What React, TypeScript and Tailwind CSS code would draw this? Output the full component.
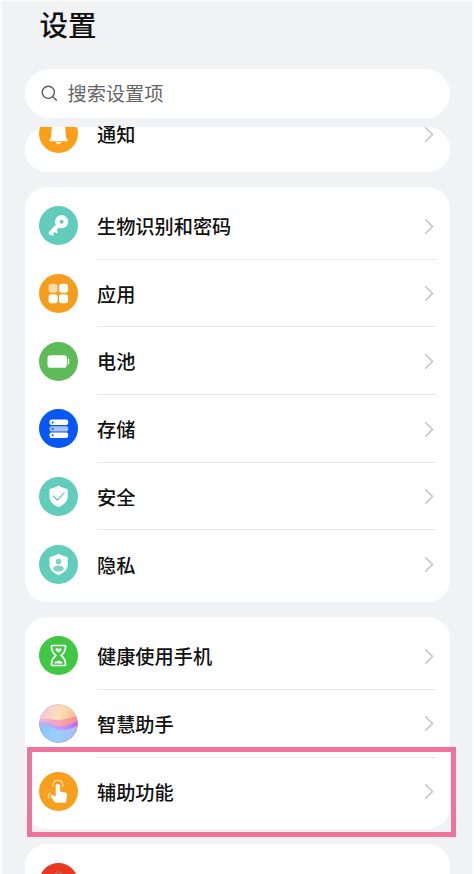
import type { ReactNode } from "react";

type Item = {
  label: string;
  color: string;
  icon: ReactNode;
};

const BellIcon = () => (
  <svg viewBox="0 0 39 39" className="size-[39px]" fill="#fff">
    <path d="M19.500 8c-4.600 0-6.600 3.300-6.900 7.400l-.5 7c-.2 1.700-.8 2.500-1.600 3.400-.5.700-.1 1.500.7 1.500h16.600c.8 0 1.200-.8.7-1.500-.8-.9-1.400-1.700-1.600-3.400l-.5-7C26.100 11.300 24.100 8 19.500 8z" />
    <path d="M16.800 28.300h5.400c-.4 1.300-1.400 2-2.700 2s-2.300-.7-2.700-2z" />
  </svg>
);

const KeyIcon = () => (
  <svg viewBox="0 0 39 39" className="size-full">
    <circle cx="22.600" cy="15.700" r="4.300" fill="none" stroke="#fff" strokeWidth="4.600" />
    <path d="M19 19.500 11.800 27" stroke="#fff" strokeWidth="4.200" strokeLinecap="round" />
    <path d="m15.500 24 2 2M12.200 27.200l1.300 1.300" stroke="#fff" strokeWidth="2.400" strokeLinecap="round" />
  </svg>
);

const AppsIcon = () => (
  <svg viewBox="0 0 39 39" className="size-full" fill="#fff">
    <rect x="9.600" y="9.800" width="9" height="9" rx="2.800" opacity=".62" />
    <rect x="20" y="9.800" width="9" height="9" rx="2.800" />
    <rect x="9.600" y="20.200" width="9" height="9" rx="2.800" />
    <rect x="20" y="20.200" width="9" height="9" rx="2.800" />
  </svg>
);

const BatteryIcon = () => (
  <svg viewBox="0 0 39 39" className="size-full" fill="#fff">
    <rect x="8.500" y="13.300" width="19.300" height="12.400" rx="2.800" />
    <path d="M28.600 16.500h.7c.6 0 1 .4 1 1v4c0 .6-.4 1-1 1h-.7z" opacity=".75" />
  </svg>
);

const StorageIcon = () => (
  <svg viewBox="0 0 39 39" className="size-full" fill="#fff">
    <rect x="10.500" y="10.600" width="18.700" height="5.400" rx="2" />
    <rect x="10.500" y="17.200" width="18.700" height="5.200" rx="2" opacity=".65" />
    <rect x="10.500" y="23.600" width="18.700" height="5.400" rx="2" />
    <g fill="#0b4fe0">
      <circle cx="13.700" cy="13.400" r="1" />
      <circle cx="13.700" cy="19.800" r="1" />
      <circle cx="13.700" cy="26.200" r="1" />
    </g>
  </svg>
);

const shield = "M19.500 8.600c-2.500 1.700-5.200 2.700-8 3.100-.7.100-1 .5-1 1.200v6.600c0 5 3.500 8.300 9 10.700 5.500-2.400 9.200-5.700 9.200-10.700v-6.600c0-.7-.4-1.100-1.100-1.200-2.900-.4-5.600-1.400-8.100-3.100z";

const SafetyIcon = () => (
  <svg viewBox="0 0 39 39" className="size-full">
    <path d={shield} fill="#fff" />
    <path d="m14 18.800 4.300 4.200 7.200-7.400" fill="none" stroke="#67cdbc" strokeWidth="1.300" />
  </svg>
);

const PrivacyIcon = () => (
  <svg viewBox="0 0 39 39" className="size-full">
    <path d={shield} fill="#fff" />
    <circle cx="19.500" cy="16.600" r="2.800" fill="#7dd3c4" />
    <ellipse cx="19.500" cy="23.500" rx="5.300" ry="3.100" fill="#7dd3c4" />
  </svg>
);

const HourglassIcon = () => (
  <svg viewBox="0 0 39 39" className="size-full" fill="none" stroke="#fff" strokeWidth="1.700" strokeLinejoin="round">
    <path d="M13.400 9.500h12.200c.8 0 1 .5 1 1-.1 4.200-1.400 6.700-4.500 9 3.100 2.300 4.400 4.800 4.500 9 0 .6-.2 1-1 1H13.400c-.8 0-1-.4-1-1 .1-4.200 1.400-6.700 4.500-9-3.100-2.300-4.400-4.800-4.500-9 0-.5.200-1 1-1z" />
    <path d="M19.500 16.700c-1.900-1.200-3.300-2.500-3-3.500.4-1.200 2-1 3-.1 1-.9 2.600-1.100 3 .1.300 1-1.100 2.300-3 3.500zM15.300 27.500c.4-2 2-2.800 4.200-2.800s3.800.8 4.200 2.800z" fill="#fff" stroke="none" />
  </svg>
);

const AssistantIcon = () => (
  <svg viewBox="0 0 39 39" className="size-full">
    <defs>
      <linearGradient id="sky" x1="0" y1=".2" x2="1" y2=".6">
        <stop offset="0" stopColor="#f0c3dd" />
        <stop offset=".45" stopColor="#fbe0b8" />
        <stop offset="1" stopColor="#ffb27c" />
      </linearGradient>
      <linearGradient id="dune" x1="0" y1="0" x2="1" y2="0">
        <stop offset="0" stopColor="#efb3e0" />
        <stop offset=".5" stopColor="#f7a3bb" />
        <stop offset="1" stopColor="#fb8f8b" />
      </linearGradient>
      <linearGradient id="sea" x1="0" y1=".3" x2="1" y2="0">
        <stop offset="0" stopColor="#b9b4f8" />
        <stop offset=".5" stopColor="#c69bf3" />
        <stop offset="1" stopColor="#b768ec" />
      </linearGradient>
      <linearGradient id="foam" x1="0" y1="0" x2="1" y2="0">
        <stop offset="0" stopColor="#8ec3fb" />
        <stop offset=".5" stopColor="#96d2ff" />
        <stop offset="1" stopColor="#b3b4fa" />
      </linearGradient>
      <clipPath id="orb">
        <circle cx="19.500" cy="19.500" r="19.200" />
      </clipPath>
    </defs>
    <g clipPath="url(#orb)">
      <path fill="url(#sky)" d="M0 0h39v39H0z" />
      <path fill="url(#dune)" d="M0 16c6-2 11-1 17 0s13-3 22-4v27H0z" />
      <path fill="url(#sea)" d="M0 18c8-1 13 3 20 4 8 .8 13-3 19-5v22H0z" />
      <path fill="url(#foam)" d="M0 21c9-1 13 4 20 5s12-2 19-4v17H0z" />
    </g>
    <circle cx="19.500" cy="19.500" r="19" fill="none" stroke="#8c83b5" strokeOpacity=".35" strokeWidth=".8" />
  </svg>
);

const TouchIcon = () => (
  <svg viewBox="0 0 39 39" className="size-full">
    <path d="M16.700 14.300c0-3 4.400-3 4.400 0v5.300l4.900.9c1.600.3 2.300 1.200 2.100 2.700l-.9 5.700c-.2 1.300-.8 1.900-2 1.900h-7.600c-1 0-1.700-.4-2.300-1.200l-3.400-4.700c-1-1.500.6-2.800 2-1.900l2.800 1.700z" fill="#fff" />
    <path d="M14.200 14.500a4.900 4.900 0 1 1 9.400 0" fill="none" stroke="#fff" strokeOpacity=".75" strokeWidth="1.100" strokeLinecap="round" />
    <path d="M11.200 21.200c-2.200 1-2.600 3-.8 5" fill="none" stroke="#fff" strokeOpacity=".75" strokeWidth="1.100" strokeLinecap="round" />
  </svg>
);

const Chevron = () => (
  <svg viewBox="0 0 10 17" className="h-[17px] w-2.5 shrink-0" fill="none" stroke="#c3c3c5" strokeWidth="1.500">
    <path d="m1.200 1.200 7.300 7.300-7.300 7.300" />
  </svg>
);

const security: Item[] = [
  { label: "生物识别和密码", color: "bg-[#61cdba]", icon: <KeyIcon /> },
  { label: "应用", color: "bg-[#f79d1e]", icon: <AppsIcon /> },
  { label: "电池", color: "bg-[#5dbb58]", icon: <BatteryIcon /> },
  { label: "存储", color: "bg-[#0757f4]", icon: <StorageIcon /> },
  { label: "安全", color: "bg-[#61cdba]", icon: <SafetyIcon /> },
  { label: "隐私", color: "bg-[#61cdba]", icon: <PrivacyIcon /> },
];

const assist: Item[] = [
  { label: "健康使用手机", color: "bg-[#40c743]", icon: <HourglassIcon /> },
  { label: "智慧助手", color: "bg-transparent", icon: <AssistantIcon /> },
  { label: "辅助功能", color: "bg-[#f99f1e]", icon: <TouchIcon /> },
];

function Row({ item, last }: { item: Item; last: boolean }) {
  return (
    <div className="flex h-[67.700px] shrink-0 items-center pl-[14.500px]">
      <div className={`size-[39px] shrink-0 overflow-hidden rounded-full ${item.color}`}>{item.icon}</div>
      <div
        className={`ml-[19px] mr-[14px] flex h-full flex-1 items-center justify-between border-b pt-[1.500px] pr-0.5 ${
          last ? "border-transparent" : "border-[#e8e8e9]"
        }`}
      >
        <span className="text-[19.200px] leading-7 font-medium text-[#111]">{item.label}</span>
        <Chevron />
      </div>
    </div>
  );
}

function Card({ items }: { items: Item[] }) {
  return (
    <section className="shrink-0 rounded-[22px] bg-white pt-[5px] pb-1">
      {items.map((item, i) => (
        <Row key={item.label} item={item} last={i === items.length - 1} />
      ))}
    </section>
  );
}

export default function App() {
  return (
    <div className="relative h-[874px] w-[474px] overflow-hidden border-x-2 border-t border-[#fbfbfc] bg-[#f1f2f4] font-['Noto_Sans_CJK_SC',sans-serif]">
      <div className="flex flex-col px-[22.500px]">
        <h1 className="h-[68px] pt-[3px] pl-[15px] text-[28.500px] leading-[40px] font-medium text-[#111]">设置</h1>

        {/* Search */}
        <div className="flex h-[48.500px] items-center rounded-full bg-white pl-4">
          <svg viewBox="0 0 17 17" className="size-[17px]" fill="none" stroke="#5e5e60" strokeWidth="1.400">
            <circle cx="7.300" cy="7.300" r="6.100" />
            <path d="m11.800 11.800 4 4" />
          </svg>
          <span className="ml-[10px] text-[19.200px] leading-7 text-[#666]">搜索设置项</span>
        </div>

        {/* Scrolled list */}
        <div className="mt-[9px] flex flex-col gap-[15px]">
          {/* Top of this row is scrolled under the search bar */}
          <section className="flex h-[45.500px] items-start rounded-[22px] bg-white pl-[14.500px]">
            <div className="flex h-[26px] w-[39px] shrink-0 items-end overflow-hidden">
              <div className="size-[39px] shrink-0 rounded-full bg-[#fb9f18]">
                <BellIcon />
              </div>
            </div>
            <div className="mr-4 ml-[19px] flex h-[15px] flex-1 items-center justify-between">
              <span className="text-[19.200px] leading-4 font-medium text-[#111]">通知</span>
              <Chevron />
            </div>
          </section>
          <Card items={security} />
          <Card items={assist} />
          <section className="h-24 rounded-[22px] bg-white pt-[18.500px] pl-[14.500px]">
            <div className="size-[39px] rounded-full bg-[#ea3820]">
              <svg viewBox="0 0 39 39" className="size-full" fill="none" stroke="#b9685a" strokeWidth="1.500">
                <circle cx="19.500" cy="11.500" r="2.800" />
              </svg>
            </div>
          </section>
        </div>
      </div>

      {/* Highlight */}
      <div className="absolute top-[746px] left-[25px] h-[90px] w-[429px] border-[5px] border-[#f0739a]" />
    </div>
  );
}
